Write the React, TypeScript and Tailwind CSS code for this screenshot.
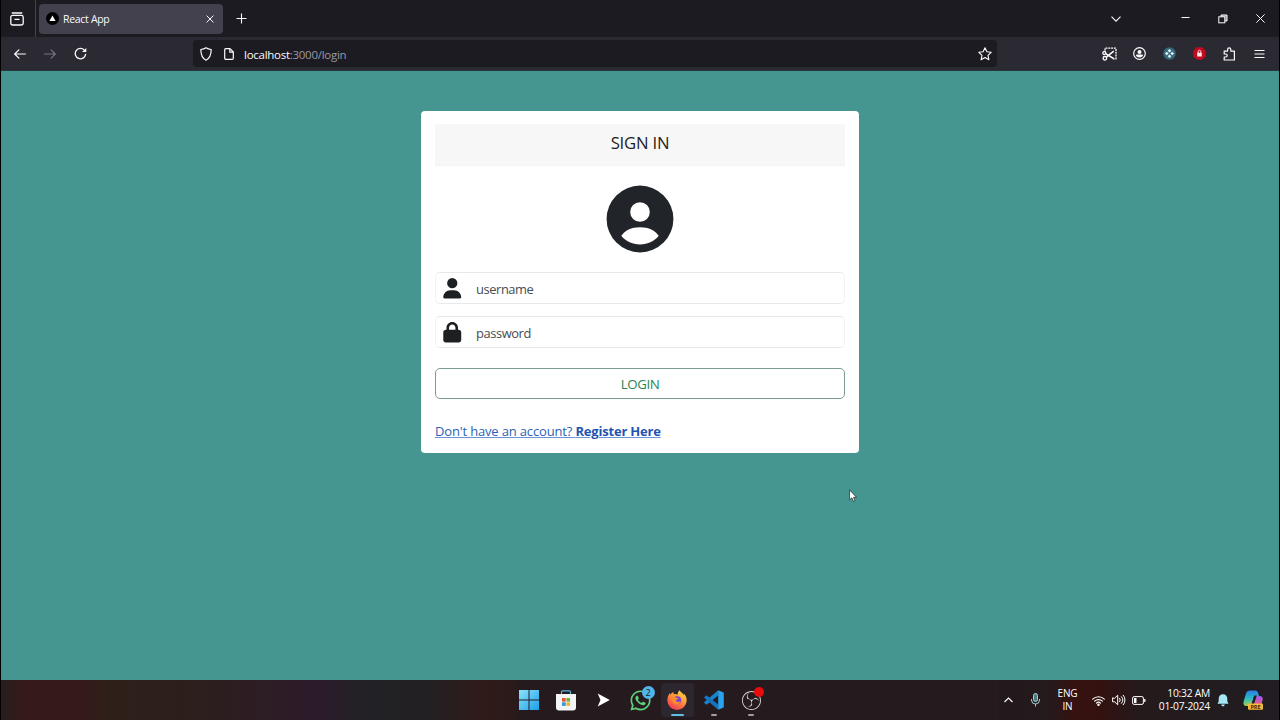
import type { ReactNode } from "react";
import { FaLock, FaUser } from "react-icons/fa6";
import { FaWhatsapp } from "react-icons/fa";
import { SiObsstudio } from "react-icons/si";

function Slot({ w, children }: { w: string; children?: ReactNode }) {
  return <div className={`flex shrink-0 items-center justify-center ${w}`}>{children}</div>;
}

function TabBar() {
  return (
    <div className="flex h-[37px] items-center bg-[#1c1b22] text-[#fbfbfe]">
      <div className="flex h-full w-[35px] items-center justify-center border-r border-[#45444d] pr-[2px]">
        <svg width="14" height="14" viewBox="0 0 14 14" fill="none" stroke="currentColor" strokeWidth="1.3">
          <path d="M2.2 1h9.6" strokeLinecap="round" />
          <rect x="0.8" y="3.4" width="12.4" height="9.6" rx="1.8" />
          <path d="M5 7.4h4" strokeLinecap="round" />
        </svg>
      </div>
      <div className="ml-[3px] flex h-[30px] w-[184px] items-center rounded-[4px] bg-[#42414d] pr-[7px] pl-[7px]">
        <svg width="13" height="13" viewBox="0 0 13 13">
          <circle cx="6.5" cy="6.5" r="6.5" fill="#000" />
          <path d="M6.5 3.4 9.6 9H3.4z" fill="#fff" />
        </svg>
        <span className="ml-1 flex-1 pt-[2px] text-[10.5px] tracking-[-0.3px]">React App</span>
        <Slot w="w-[13px]">
          <svg width="8" height="8" viewBox="0 0 8 8" stroke="currentColor">
            <path d="M.6.6l6.8 6.8M7.4.6.6 7.4" />
          </svg>
        </Slot>
      </div>
      <Slot w="w-[36px]">
        <svg width="11" height="11" viewBox="0 0 11 11" stroke="currentColor" strokeWidth="1.1">
          <path d="M5.5.5v10M.5 5.5h10" />
        </svg>
      </Slot>
      <div className="flex-1" />
      <Slot w="w-[30px]">
        <svg width="10" height="6" viewBox="0 0 10 6" fill="none" stroke="currentColor" strokeWidth="1.1">
          <path d="M.5.6 5 5.1 9.5.6" />
        </svg>
      </Slot>
      <Slot w="w-[36px]" />
      <Slot w="w-[37px]">
        <svg width="9" height="9" viewBox="0 0 9 9" stroke="currentColor">
          <path d="M.5 3.5h8" />
        </svg>
      </Slot>
      <Slot w="w-[38px]">
        <svg width="10" height="10" viewBox="0 0 10 10" fill="none" stroke="currentColor">
          <path d="M3 3V1h6v6H7" fill="#8b8a93" />
          <rect x="0.8" y="2.8" width="6" height="6" fill="#1c1b22" />
        </svg>
      </Slot>
      <Slot w="w-[37px]">
        <svg width="9" height="9" viewBox="0 0 9 9" stroke="currentColor">
          <path d="M.4.4l8.2 8.2M8.6.4.4 8.6" />
        </svg>
      </Slot>
    </div>
  );
}

function AddressBar() {
  return (
    <div className="flex h-[27px] w-[804px] items-center rounded-[4px] bg-[#1c1b22] pl-[7px]">
      <svg width="12" height="14" viewBox="0 0 12 14" fill="none" stroke="currentColor" strokeWidth="1.2" strokeLinejoin="round">
        <path d="M6 .8c1.3 1 3.2 1.6 5.2 1.7C11.2 7.6 9.8 11.3 6 13.2 2.2 11.3.8 7.6.8 2.5 2.8 2.4 4.7 1.8 6 .8z" />
      </svg>
      <svg className="ml-[12px]" width="10" height="12" viewBox="0 0 10 12" fill="none" stroke="currentColor" strokeWidth="1.2" strokeLinejoin="round">
        <path d="M1.8.7H6L9.3 4v6.2a1.1 1.1 0 0 1-1.1 1.1H1.8A1.1 1.1 0 0 1 .7 10.2V1.8A1.1 1.1 0 0 1 1.8.7z" />
        <path d="M5.8.7v3.5h3.5" />
      </svg>
      <span className="ml-[10px] pt-[2px] text-[11.5px] tracking-[-0.27px]">
        localhost<span className="text-[#9a99a2]">:3000/login</span>
      </span>
      <div className="flex-1" />
      <Slot w="w-[25px]">
        <svg width="14" height="14" viewBox="0 0 14 14" fill="none" stroke="currentColor" strokeWidth="1.1" strokeLinejoin="round">
          <path d="M7 .8l1.9 4 4.3.5-3.2 3 .9 4.4L7 10.5l-3.9 2.2.9-4.4-3.2-3 4.300-.5z" />
        </svg>
      </Slot>
    </div>
  );
}

function Toolbar() {
  return (
    <div className="flex h-[34px] items-center border-b border-[#24373c] bg-[#2b2a33] pl-1 text-[#fbfbfe]">
      <Slot w="w-[30px]">
        <svg width="12" height="10" viewBox="0 0 12 10" fill="none" stroke="currentColor" strokeWidth="1.2" strokeLinecap="round" strokeLinejoin="round">
          <path d="M11.4 5H.7M4.9.8.7 5l4.200 4.200" />
        </svg>
      </Slot>
      <Slot w="w-[30px]">
        <svg className="text-[#77767f]" width="12" height="10" viewBox="0 0 12 10" fill="none" stroke="currentColor" strokeWidth="1.1" strokeLinecap="round" strokeLinejoin="round">
          <path d="M.6 5h10.7M7.1.8 11.3 5 7.1 9.2" />
        </svg>
      </Slot>
      <Slot w="w-[30px]">
        <svg width="13" height="13" viewBox="0 0 13 13" fill="none" stroke="currentColor" strokeWidth="1.3" strokeLinecap="round">
          <path d="M11.6 7.4A5.2 5.2 0 1 1 10.3 3.1" />
          <path d="M12.3.9v4.200H8z" fill="currentColor" stroke="none" />
        </svg>
      </Slot>
      <div className="w-[98px]" />
      <AddressBar />
      <div className="flex-1" />
      <Slot w="w-[30px]">
        <svg width="15" height="14" viewBox="0 0 15 14" fill="none" stroke="currentColor" strokeWidth="1.3">
          <path d="M3 3.5V1.2h11v10.600h-3" strokeDasharray="2 0.8" />
          <circle cx="2.3" cy="6" r="1.5" />
          <circle cx="2.9" cy="11.3" r="1.8" />
          <path d="M3.7 6.7l7.8 4.8M4.2 10.2l7.6-6" strokeWidth="1.5" />
        </svg>
      </Slot>
      <Slot w="w-[31px]">
        <svg width="13" height="13" viewBox="0 0 13 13">
          <circle cx="6.5" cy="6.5" r="5.8" fill="none" stroke="currentColor" strokeWidth="1.2" />
          <circle cx="6.5" cy="4.9" r="2" fill="currentColor" />
          <path d="M2.9 8.3c0-.6.4-.9.9-.9h5.400c.5 0 .9.3.9.9-.7 1.400-2 2.200-3.600 2.200S3.600 9.700 2.900 8.300z" fill="currentColor" />
        </svg>
      </Slot>
      <Slot w="w-[29px]">
        <svg width="13" height="13" viewBox="0 0 13 13">
          <circle cx="6.5" cy="6.5" r="6.2" fill="#35697c" />
          <path d="M6.5 2 8.300 3.800 6.500 5.600 4.700 3.800zM6.500 7.400l1.800 1.800L6.500 11 4.700 9.200zM3.800 4.700l1.800 1.800-1.800 1.800L2 6.500zM9.200 4.700 11 6.500 9.200 8.300 7.400 6.500z" fill="#e8f4f6" />
        </svg>
      </Slot>
      <Slot w="w-[30px]">
        <svg width="13" height="13" viewBox="0 0 13 13">
          <path d="M3.8.3h5.400l3.500 3.500v5.400l-3.500 3.500H3.800L.3 9.200V3.800z" fill="#c20a22" />
          <path d="M5.2 6V4.600a1.300 1.300 0 0 1 2.600 0V6" fill="none" stroke="#ffd9dc" />
          <rect x="4.2" y="5.7" width="4.6" height="3.7" rx=".5" fill="#ffe9eb" />
        </svg>
      </Slot>
      <Slot w="w-[31px]">
        <svg width="13" height="14" viewBox="0 0 13 14" fill="none" stroke="currentColor" strokeWidth="1.2" strokeLinejoin="round">
          <path d="M1.2 4.1h3.4V2.4a1.6 1.6 0 0 1 3.2 0v1.7h3.6V13H1.200v-3h1.500a1.500 1.500 0 0 0 0-3H1.200z" />
        </svg>
      </Slot>
      <Slot w="w-[29px]">
        <svg width="11" height="10" viewBox="0 0 11 10" stroke="currentColor" strokeWidth="1.1">
          <path d="M.5 1.5h10M.5 5h10M.5 8.500h10" />
        </svg>
      </Slot>
      <div className="w-[5px]" />
    </div>
  );
}

function Avatar() {
  return (
    <svg width="68" height="68" viewBox="0 0 68 68">
      <circle cx="34" cy="34" r="33.400" fill="#212529" />
      <circle cx="34" cy="27" r="9.8" fill="#fff" />
      <path d="M15.300 50.800C19 45.300 25 42.200 34 42.200s15 3.100 18.700 8.600c-4 5.400-10.700 8.600-18.700 8.600s-14.700-3.200-18.700-8.600z" fill="#fff" />
    </svg>
  );
}

function Field({ icon, label }: { icon: ReactNode; label: string }) {
  return (
    <div className="flex h-8 items-center rounded-[5px] border border-x-[#f0f2f3] border-y-[#e6e8ea]">
      <div className="flex w-8 justify-center pt-px text-[20.5px] text-[#1d2022]">{icon}</div>
      <input
        type="text"
        placeholder={label}
        className="ml-2 w-[340px] pt-[3px] text-[12.9px] tracking-[-0.42px] outline-none placeholder:text-[#474c50]"
      />
    </div>
  );
}

function LoginCard() {
  return (
    <div className="h-[342px] w-[438px] rounded-[4px] bg-white px-[14px] pt-[13px]">
      <div className="flex h-[42px] items-center justify-center border-b border-[#f3f3f3] bg-[#f7f7f7] pb-[3px] text-[16.7px] tracking-[-0.2px] text-[#1b1e21]">
        SIGN IN
      </div>
      <div className="mt-[19px] flex justify-center">
        <Avatar />
      </div>
      <div className="mt-[19px] flex flex-col gap-3">
        <Field icon={<FaUser />} label="username" />
        <Field icon={<FaLock />} label="password" />
      </div>
      <button className="mt-5 flex h-[31px] w-full items-center justify-center rounded-[5px] border border-[#7a9b96] pt-[3px] text-[13.3px] tracking-[-0.4px] text-[#2a8354]">
        LOGIN
      </button>
      <a href="#" className="mt-[22px] block text-[13px] leading-5 tracking-[-0.16px] text-[#2c5fb4] underline decoration-[#6d93d6] decoration-1 underline-offset-1">
        Don't have an account? <b className="tracking-[-0.2px] text-[#1f55b0]">Register Here</b>
      </a>
    </div>
  );
}

function TaskApp({ children, mark }: { children: ReactNode; mark?: string }) {
  return (
    <div className="relative flex h-10 w-[37px] items-center justify-center">
      {children}
      {mark && <span className={`absolute bottom-[4px] h-[2px] rounded-full ${mark}`} />}
    </div>
  );
}

function WindowsLogo() {
  return (
    <svg width="20" height="20" viewBox="0 0 20 20">
      <defs>
        <linearGradient id="win" x1="0" y1="0" x2="1" y2="1">
          <stop offset="0" stopColor="#8be3fb" />
          <stop offset="1" stopColor="#1c9fe8" />
        </linearGradient>
      </defs>
      <path d="M0 0h9.500v9.500H0zM10.500 0H20v9.500h-9.500zM0 10.500h9.500V20H0zM10.500 10.500H20V20h-9.500z" fill="url(#win)" />
    </svg>
  );
}

function StoreLogo() {
  return (
    <svg width="20" height="21" viewBox="0 0 20 21">
      <path d="M5.5 5V1.800a1 1 0 0 1 1-1h7a1 1 0 0 1 1 1V5" fill="none" stroke="#58b4dc" strokeWidth="1.2" />
      <path d="M0 4h20v13.500a3 3 0 0 1-3 3H3a3 3 0 0 1-3-3z" fill="#f3f4f6" />
      <path d="M6 8h3.700v3.600H6z" fill="#e2533b" />
      <path d="M10.400 8h3.700v3.600h-3.700z" fill="#76b03e" />
      <path d="M6 12.300h3.700v3.600H6z" fill="#3498d8" />
      <path d="M10.400 12.300h3.700v3.600h-3.700z" fill="#f0b432" />
    </svg>
  );
}

function FirefoxLogo() {
  return (
    <svg width="20" height="20" viewBox="0 0 20 20">
      <defs>
        <linearGradient id="fox" x1=".8" y1="0" x2=".2" y2="1">
          <stop offset="0" stopColor="#ffe04a" />
          <stop offset=".45" stopColor="#ff9033" />
          <stop offset="1" stopColor="#f0305a" />
        </linearGradient>
      </defs>
      <path d="M12.500.3c1 2 3 2.500 4.200 4.600.2-.4.2-.9.1-1.300 1.900 1.900 2.900 4.500 2.900 7A9.600 9.600 0 0 1 10 19.900 9.600 9.600 0 0 1 .3 10.500C.3 7.800 1.200 5 2.800 3c.1.7.2 1.100.5 1.600C4.400 3.200 5 2.700 6.400 2c-.1.9.1 1.600.5 2.200 1.500-.3 2.600 0 3.600.6.2-1.700.8-3.400 2-4.500z" fill="url(#fox)" />
      <circle cx="10.2" cy="10.3" r="4" fill="#7543d8" />
      <path d="M4.400 7.300c1.700-.7 3.700-.5 5.200.4l2 .6c-.4 1.100-2.200 1.100-2.600 2-.2 1 .7 1.700 1.700 1.700 1.200 0 2-.7 3-.5-.6 1.700-2.100 2.900-4 2.900-3 0-5.500-2.600-5.300-7.100z" fill="#ff8a2c" />
    </svg>
  );
}

function VsCodeLogo() {
  return (
    <svg width="20" height="20" viewBox="0 0 20 20">
      <path d="M14.200.2v5.300L2.600 14.800.4 13.100c-.4-.4-.4-.8 0-1.200z" fill="#1a83cc" />
      <path d="M14.200 19.800v-5.300L2.600 5.200.4 6.900c-.4.4-.4.8 0 1.200z" fill="#1673bd" />
      <path d="M14.200.2 19 2.300c.6.3.8.7.8 1.300v12.800c0 .6-.2 1-.8 1.300l-4.800 2.100z" fill="#2aa3ee" />
    </svg>
  );
}

function CopilotLogo() {
  return (
    <svg width="21" height="20" viewBox="0 0 21 20">
      <defs>
        <linearGradient id="copA" x1="0" y1="0" x2="0" y2="1">
          <stop offset="0" stopColor="#2a7de8" />
          <stop offset=".5" stopColor="#29b8c8" />
          <stop offset="1" stopColor="#a6d34a" />
        </linearGradient>
        <linearGradient id="copB" x1="0" y1="0" x2="0" y2="1">
          <stop offset="0" stopColor="#9a5cf0" />
          <stop offset="1" stopColor="#f0568c" />
        </linearGradient>
      </defs>
      <path d="M7 .5h5.500c1.500 0 2.200 1 2.600 2.400L16 6h-3c-1.500 0-2.200.7-2.600 2L8.600 14c-.4 1.300-1.200 2-2.600 2H3.500C.8 16 0 14 .6 11.500L3 3.500C3.600 1.500 5 .5 7 .5z" fill="url(#copA)" />
      <path d="M13 6h3.500c2.500 0 3.700 1.500 3.100 4l-1.300 5H9l2-7c.4-1.300.9-2 2-2z" fill="url(#copB)" />
      <path d="M11.300 5.500h2.500L11 14H8.700z" fill="#241d22" />
      <rect x="5" y="13.500" width="15" height="6.300" rx="1" fill="#f4b83c" />
      <text x="12.500" y="18.700" fontSize="5.500" fontWeight="700" textAnchor="middle" fill="#3a2a08">PRE</text>
    </svg>
  );
}

function Taskbar() {
  return (
    <div className="flex h-10 bg-[linear-gradient(90deg,#261e20_0%,#351a19_4%,#351a19_16%,#2e2019_22%,#2c1f1c_38%,#2d1d24_50%,#2c1b2a_62%,#222226_72%,#231f22_84%,#301b18_94%,#2a1a1a_100%)] bg-[length:514px_100%] bg-no-repeat text-white">
      <div className="w-[509.5px]" />
      <TaskApp><WindowsLogo /></TaskApp>
      <TaskApp><StoreLogo /></TaskApp>
      <TaskApp>
        <svg width="13" height="14" viewBox="0 0 13 14"><path d="M.7.5 12.800 7 .7 13.500 3.500 7z" fill="#fff" /></svg>
      </TaskApp>
      <TaskApp>
        <FaWhatsapp className="size-[23px] text-[#5fd07c]" />
        <span className="absolute top-[6px] right-[4px] flex size-[13px] items-center justify-center rounded-full bg-[#52b5e8] text-[9px] text-[#10242e]">2</span>
      </TaskApp>
      <TaskApp mark="w-[13px] bg-[#62bde0]">
        <div className="absolute inset-x-[2px] top-[3px] bottom-[3px] rounded-[4px] bg-[#2c262e]" />
        <div className="relative"><FirefoxLogo /></div>
      </TaskApp>
      <TaskApp mark="w-[6px] bg-[#a09fa3]"><VsCodeLogo /></TaskApp>
      <TaskApp mark="w-[6px] bg-[#a09fa3]">
        <SiObsstudio className="size-[19px] text-[#d2d2d4]" />
        <span className="absolute top-[7px] right-[6px] size-[10px] rounded-full bg-[#e80c0c]" />
      </TaskApp>
      <div className="flex-1" />
      <div className="flex w-[280px] items-center bg-[linear-gradient(90deg,#22191c_0%,#251a1c_18%,#36110f_27%,#34110f_36%,#241a1c_50%,#211d22_100%)]">
        <div className="w-1" />
        <Slot w="w-[11px]">
          <svg width="9" height="6" viewBox="0 0 9 6" fill="none" stroke="currentColor" strokeWidth="1.1"><path d="M.5 5 4.500 1l4 4" /></svg>
        </Slot>
        <Slot w="w-[42px]">
          <svg width="9" height="14" viewBox="0 0 9 14" fill="none" stroke="#a9cfd4">
            <rect x="2.5" y=".5" width="4" height="8" rx="2" fill="#4b7b83" />
            <path d="M.5 6v1a4 4 0 0 0 8 0V6M4.500 11v2.500" />
          </svg>
        </Slot>
        <div className="w-[23px] text-center text-[10px] leading-[13px] tracking-[-0.2px]">ENG<br />IN</div>
        <Slot w="w-[39px]">
          <svg width="13" height="11" viewBox="0 0 13 11" fill="none" stroke="currentColor" strokeWidth="1.1" strokeLinecap="round">
            <path d="M.7 4.200a8.200 8.200 0 0 1 11.600 0M2.600 6.200a5.500 5.500 0 0 1 7.800 0M4.400 8.100a3 3 0 0 1 4.200 0" />
            <circle cx="6.5" cy="9.7" r=".7" fill="currentColor" />
          </svg>
        </Slot>
        <svg className="-ml-[6px] shrink-0" width="14" height="12" viewBox="0 0 14 12" fill="none" stroke="currentColor" strokeLinecap="round" strokeLinejoin="round">
          <path d="M.6 4.200v3.600h2L5.700 10.800V1.200L2.600 4.200zM7.700 4.300a2.700 2.700 0 0 1 0 3.400M9.500 2.700a5 5 0 0 1 0 6.600M11.300 1.200a7.300 7.300 0 0 1 0 9.600" />
        </svg>
        <svg className="ml-[6px] shrink-0" width="14" height="9" viewBox="0 0 14 9" fill="none" stroke="currentColor">
          <rect x=".6" y=".6" width="10.8" height="7.8" rx="1.5" />
          <rect x="2" y="2" width="2.5" height="5" fill="currentColor" stroke="none" />
          <path d="M12.800 3v3" strokeWidth="1.3" />
        </svg>
        <div className="w-[64px] shrink-0 text-right text-[10.3px] leading-[13px] tracking-[-0.25px] whitespace-nowrap">10:32 AM<br />01-07-2024</div>
        <Slot w="w-[26px]">
          <svg width="12" height="13" viewBox="0 0 12 13" fill="#a5e6f7">
            <path d="M6 .3c2.600 0 4.300 1.900 4.300 4.400v2.500l1.200 2.600H.5l1.200-2.600V4.700C1.700 2.200 3.400.3 6 .3zM4.200 10.600h3.600a1.800 1.800 0 0 1-3.600 0z" />
          </svg>
        </Slot>
        <div className="ml-[7px]"><CopilotLogo /></div>
      </div>
    </div>
  );
}

export default function App() {
  return (
    <div className="relative h-[720px] w-[1280px] overflow-hidden border-x border-black bg-[#251b1f] font-['Open_Sans','Noto_Sans',sans-serif]">
      <TabBar />
      <Toolbar />
      <main className="flex h-[609px] justify-center bg-[#459590] pt-10">
        <LoginCard />
      </main>
      <Taskbar />
      <svg className="absolute top-[489px] left-[848px]" width="8" height="13" viewBox="0 0 8 13">
        <path d="M.6.9v10l2.300-2.100 1.500 3.500 1.600-.7-1.500-3.300h3z" fill="#fff" stroke="#222" strokeWidth=".7" />
      </svg>
    </div>
  );
}
